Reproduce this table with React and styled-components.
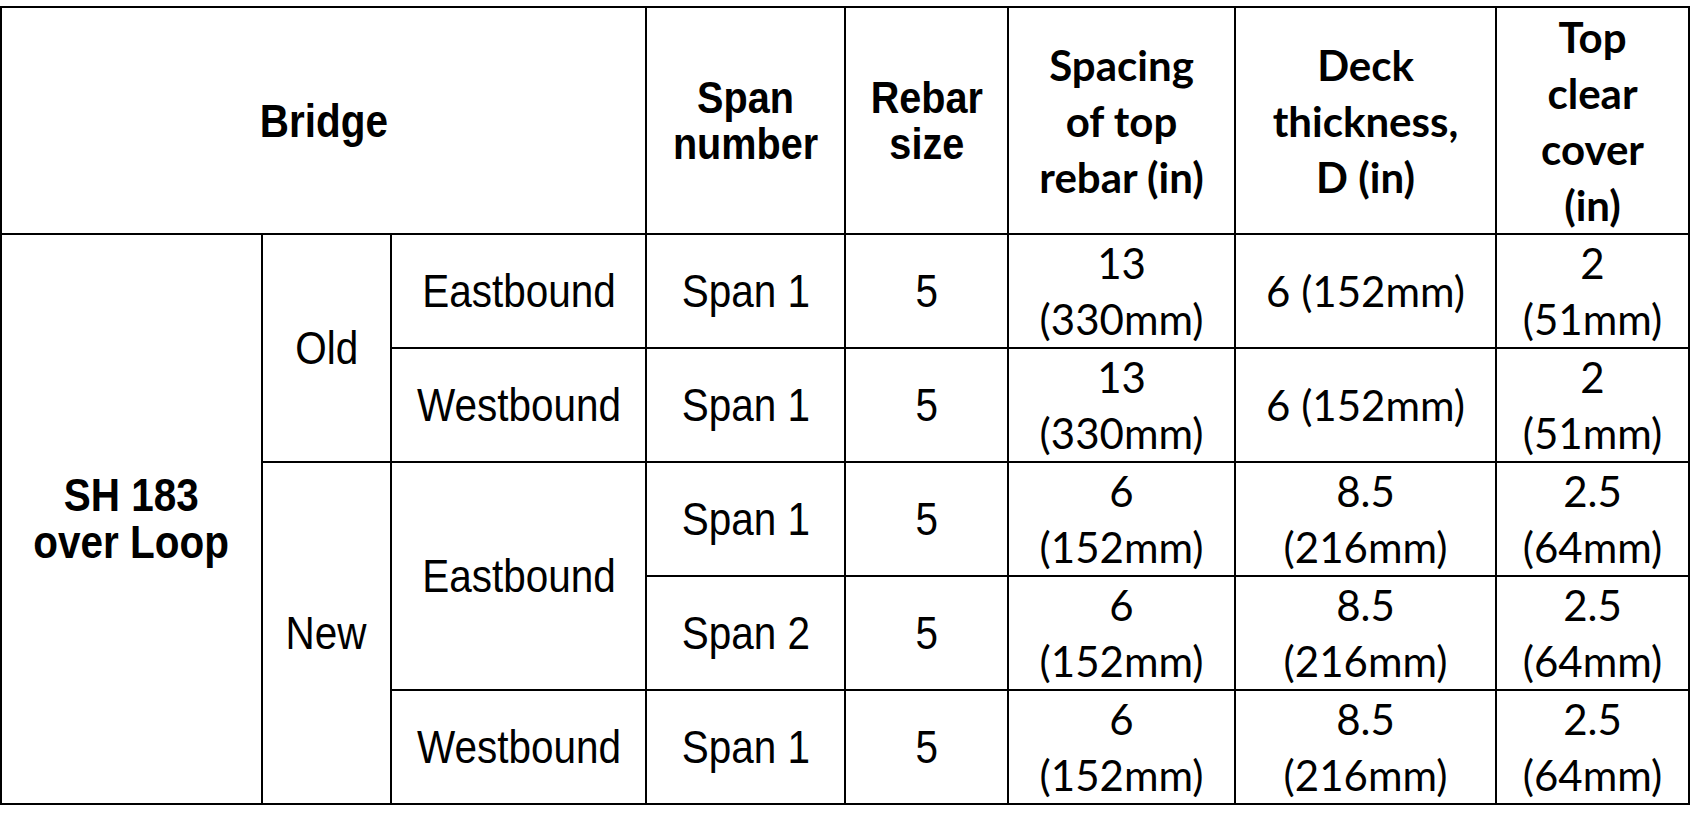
import React from "react";
import styled, { createGlobalStyle } from "styled-components";

const GlobalStyle = createGlobalStyle`
  html, body {
    margin: 0;
    padding: 0;
    background: #fff;
  }
`;

const Page = styled.div`
  padding: 6px 0 0 0;
`;

const Table = styled.table`
  border-collapse: collapse;
  table-layout: fixed;
  width: 1688px;
  color: #000;
  border: 2px solid #000;
`;

const HeadRow = styled.tr`
  height: 227px;
`;

const BodyRow = styled.tr`
  height: 114px;
`;

const Cell = styled.td`
  border: 2px solid #000;
  padding: 0;
  text-align: center;
  vertical-align: middle;
  overflow: hidden;
  white-space: nowrap;
`;

// Arial-style text (looks slightly condensed in the source document)
const Sans = styled.span`
  display: inline-block;
  font-family: "Liberation Sans", Arial, sans-serif;
  font-size: ${(p) => p.$size || 46}px;
  font-weight: ${(p) => (p.$bold ? 700 : 400)};
  line-height: ${(p) => p.$lh || 52}px;
  transform: scaleX(0.88);
`;

// Calibri-style text for the numeric columns
const Figure = styled.span`
  display: inline-block;
  font-family: Lato, "Open Sans", sans-serif;
  font-size: 42px;
  font-weight: ${(p) => (p.$bold ? 700 : 400)};
  line-height: 56px;
`;

const widths = [261, 129, 255, 199, 163, 227, 261, 193];

const lines = (text) =>
  text.split("\n").map((line, i, arr) => (
    <React.Fragment key={i}>
      {line}
      {i < arr.length - 1 && <br />}
    </React.Fragment>
  ));

const oldRow = ["Span 1", "5", "13\n(330mm)", "6 (152mm)", "2\n(51mm)"];
const newRow = (span) => [span, "5", "6\n(152mm)", "8.5\n(216mm)", "2.5\n(64mm)"];

function Values({ values }) {
  const [span, size, spacing, deck, cover] = values;
  return (
    <>
      <Cell>
        <Sans>{span}</Sans>
      </Cell>
      <Cell>
        <Sans>{size}</Sans>
      </Cell>
      <Cell>
        <Figure>{lines(spacing)}</Figure>
      </Cell>
      <Cell>
        <Figure>{lines(deck)}</Figure>
      </Cell>
      <Cell>
        <Figure>{lines(cover)}</Figure>
      </Cell>
    </>
  );
}

export default function App() {
  return (
    <Page>
      <GlobalStyle />
      <Table>
        <colgroup>
          {widths.map((w, i) => (
            <col key={i} style={{ width: w }} />
          ))}
        </colgroup>
        <thead>
          <HeadRow>
            <Cell as="th" colSpan={3}>
              <Sans $bold>Bridge</Sans>
            </Cell>
            <Cell as="th">
              <Sans $bold $size={45} $lh={46}>
                {lines("Span\nnumber")}
              </Sans>
            </Cell>
            <Cell as="th">
              <Sans $bold $size={45} $lh={46}>
                {lines("Rebar\nsize")}
              </Sans>
            </Cell>
            <Cell as="th">
              <Figure $bold>{lines("Spacing\nof top\nrebar (in)")}</Figure>
            </Cell>
            <Cell as="th">
              <Figure $bold>{lines("Deck\nthickness,\nD (in)")}</Figure>
            </Cell>
            <Cell as="th">
              <Figure $bold>{lines("Top\nclear\ncover\n(in)")}</Figure>
            </Cell>
          </HeadRow>
        </thead>
        <tbody>
          <BodyRow>
            <Cell rowSpan={5}>
              <Sans $bold $lh={47}>
                {lines("SH 183\nover Loop")}
              </Sans>
            </Cell>
            <Cell rowSpan={2}>
              <Sans>Old</Sans>
            </Cell>
            <Cell>
              <Sans>Eastbound</Sans>
            </Cell>
            <Values values={oldRow} />
          </BodyRow>
          <BodyRow>
            <Cell>
              <Sans>Westbound</Sans>
            </Cell>
            <Values values={oldRow} />
          </BodyRow>
          <BodyRow>
            <Cell rowSpan={3}>
              <Sans>New</Sans>
            </Cell>
            <Cell rowSpan={2}>
              <Sans>Eastbound</Sans>
            </Cell>
            <Values values={newRow("Span 1")} />
          </BodyRow>
          <BodyRow>
            <Values values={newRow("Span 2")} />
          </BodyRow>
          <BodyRow>
            <Cell>
              <Sans>Westbound</Sans>
            </Cell>
            <Values values={newRow("Span 1")} />
          </BodyRow>
        </tbody>
      </Table>
    </Page>
  );
}
